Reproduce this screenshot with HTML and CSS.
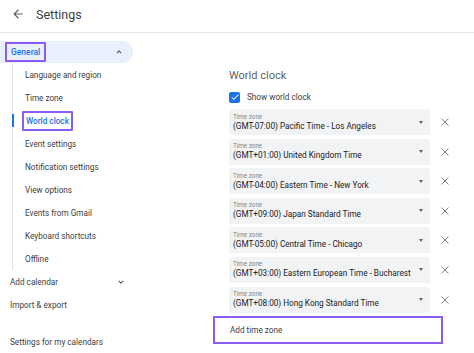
FILE: index.html
```html
<!DOCTYPE html>
<html>
<head>
<meta charset="utf-8">
<link rel="stylesheet" href="styles.css">
</head>
<body>
<header class="topbar">
  <svg class="back" width="14" height="14" viewBox="0 0 24 24"><path d="M20 11H7.83l5.59-5.59L12 4l-8 8 8 8 1.41-1.41L7.83 13H20v-2z" fill="#5f6368"/></svg>
  <span class="title">Settings</span>
</header>
<div class="main">
  <nav class="side">
    <div class="pill">
      <span class="hl general">General</span>
      <svg class="chev" width="10" height="10" viewBox="0 0 24 24"><path d="M7.41 15.41L12 10.83l4.59 4.58L18 14l-6-6-6 6z" fill="#3c4043"/></svg>
    </div>
    <ul class="sub">
      <li>Language and region</li>
      <li>Time zone</li>
      <li class="active"><span class="hl wc">World clock</span></li>
      <li>Event settings</li>
      <li>Notification settings</li>
      <li>View options</li>
      <li>Events from Gmail</li>
      <li>Keyboard shortcuts</li>
      <li>Offline</li>
    </ul>
    <div class="top-item">Add calendar
      <svg class="chev" width="10" height="10" viewBox="0 0 24 24"><path d="M7.41 8.59L12 13.17l4.59-4.58L18 10l-6 6-6-6z" fill="#3c4043"/></svg>
    </div>
    <div class="top-item">Import &amp; export</div>
    <div class="top-item section">Settings for my calendars</div>
  </nav>
  <section class="content">
    <h2>World clock</h2>
    <label class="check">
      <span class="box"><svg width="10" height="10" viewBox="0 0 24 24"><path d="M9 16.2L4.8 12l-1.4 1.4L9 19 21 7l-1.4-1.4L9 16.2z" fill="#fff"/></svg></span>
      Show world clock
    </label>
    <div class="zones">
      <div class="zone"><div class="field"><div class="txt"><span class="lbl">Time zone</span><span class="val">(GMT-07:00) Pacific Time - Los Angeles</span></div><span class="tri"></span></div><svg class="x" width="8" height="8" viewBox="0 0 8 8"><path d="M0.5 0.5L7.5 7.5M7.5 0.5L0.5 7.5" stroke="#70757a" stroke-width="0.9"/></svg></div>
      <div class="zone"><div class="field"><div class="txt"><span class="lbl">Time zone</span><span class="val">(GMT+01:00) United Kingdom Time</span></div><span class="tri"></span></div><svg class="x" width="8" height="8" viewBox="0 0 8 8"><path d="M0.5 0.5L7.5 7.5M7.5 0.5L0.5 7.5" stroke="#70757a" stroke-width="0.9"/></svg></div>
      <div class="zone"><div class="field"><div class="txt"><span class="lbl">Time zone</span><span class="val">(GMT-04:00) Eastern Time - New York</span></div><span class="tri"></span></div><svg class="x" width="8" height="8" viewBox="0 0 8 8"><path d="M0.5 0.5L7.5 7.5M7.5 0.5L0.5 7.5" stroke="#70757a" stroke-width="0.9"/></svg></div>
      <div class="zone"><div class="field"><div class="txt"><span class="lbl">Time zone</span><span class="val">(GMT+09:00) Japan Standard Time</span></div><span class="tri"></span></div><svg class="x" width="8" height="8" viewBox="0 0 8 8"><path d="M0.5 0.5L7.5 7.5M7.5 0.5L0.5 7.5" stroke="#70757a" stroke-width="0.9"/></svg></div>
      <div class="zone"><div class="field"><div class="txt"><span class="lbl">Time zone</span><span class="val">(GMT-05:00) Central Time - Chicago</span></div><span class="tri"></span></div><svg class="x" width="8" height="8" viewBox="0 0 8 8"><path d="M0.5 0.5L7.5 7.5M7.5 0.5L0.5 7.5" stroke="#70757a" stroke-width="0.9"/></svg></div>
      <div class="zone"><div class="field"><div class="txt"><span class="lbl">Time zone</span><span class="val">(GMT+03:00) Eastern European Time - Bucharest</span></div><span class="tri"></span></div><svg class="x" width="8" height="8" viewBox="0 0 8 8"><path d="M0.5 0.5L7.5 7.5M7.5 0.5L0.5 7.5" stroke="#70757a" stroke-width="0.9"/></svg></div>
      <div class="zone"><div class="field"><div class="txt"><span class="lbl">Time zone</span><span class="val">(GMT+08:00) Hong Kong Standard Time</span></div><span class="tri"></span></div><svg class="x" width="8" height="8" viewBox="0 0 8 8"><path d="M0.5 0.5L7.5 7.5M7.5 0.5L0.5 7.5" stroke="#70757a" stroke-width="0.9"/></svg></div>
    </div>
    <div class="add">Add time zone</div>
  </section>
</div>
</body>
</html>
```
FILE: styles.css
```css
* { box-sizing: border-box; }
html, body { margin: 0; padding: 0; background: #fff; overflow: hidden; }
body { font-family: Roboto, "Liberation Sans", sans-serif; color: #3c4043; width: 474px; height: 353px; }
.topbar { height: 33px; display: flex; align-items: center; border-bottom: 1px solid #e6e7e9; padding-left: 11px; padding-bottom: 4px; }
.back { margin-right: 11px; }
.title { font-size: 12.5px; color: #3c4043; }
.main { display: flex; }
.side { width: 200px; padding-top: 8px; font-size: 8.2px; }
.pill { width: 133px; height: 22px; background: #e8f0fe; border-radius: 0 11px 11px 0; display: flex; align-items: center; justify-content: space-between; padding-left: 5px; padding-right: 9px; }
.hl { border: 2px solid #8a5cf5; border-radius: 1px; }
.general { color: #1a73e8; font-weight: 500; padding: 3px 4px 3px 4px; font-size: 8.5px; }
.sub { list-style: none; margin: 0 0 0 12px; padding: 0; border-left: 1px solid #e3e4e6; }
.sub li { height: 23px; display: flex; align-items: center; padding-left: 12px; position: relative; }
.sub li.active::before { content: ""; position: absolute; left: -1px; top: 5px; width: 2px; height: 13px; background: #1a73e8; }
.wc { color: #1a73e8; font-weight: 500; padding: 3px 2px; margin-left: -3px; }
.top-item { height: 23px; display: flex; align-items: center; justify-content: space-between; width: 133px; padding-left: 10px; padding-right: 7px; }
.top-item.section { margin-top: 14px; }
.content { flex: 1; padding-left: 29px; padding-top: 35px; }
h2 { margin: 0; font-size: 11px; font-weight: 400; color: #5f6368; height: 16px; line-height: 16px; }
.check { display: flex; align-items: center; font-size: 8.2px; margin-top: 7px; height: 12px; }
.box { width: 11px; height: 11px; background: #1a73e8; border-radius: 2px; display: flex; align-items: center; justify-content: center; margin-right: 7px; }
.zones { margin-top: 6px; display: flex; flex-direction: column; gap: 3.6px; }
.zone { display: flex; align-items: center; }
.field { width: 201px; height: 26px; background: #f1f3f4; border-radius: 3px 3px 0 0; display: flex; align-items: center; justify-content: space-between; padding-left: 4px; padding-right: 7px; }
.txt { display: flex; flex-direction: column; }
.lbl { font-size: 6.3px; color: #80868b; line-height: 8px; }
.val { font-size: 8.2px; color: #202124; line-height: 11px; }
.tri { width: 0; height: 0; border-left: 2.5px solid transparent; border-right: 2.5px solid transparent; border-top: 3px solid #5f6368; }
.x { margin-left: 11px; }
.add { margin-left: -16px; margin-top: 3px; width: 230px; height: 28px; border: 2px solid #8a5cf5; display: flex; align-items: center; padding-left: 15px; font-size: 8.2px; color: #3c4043; }
```
